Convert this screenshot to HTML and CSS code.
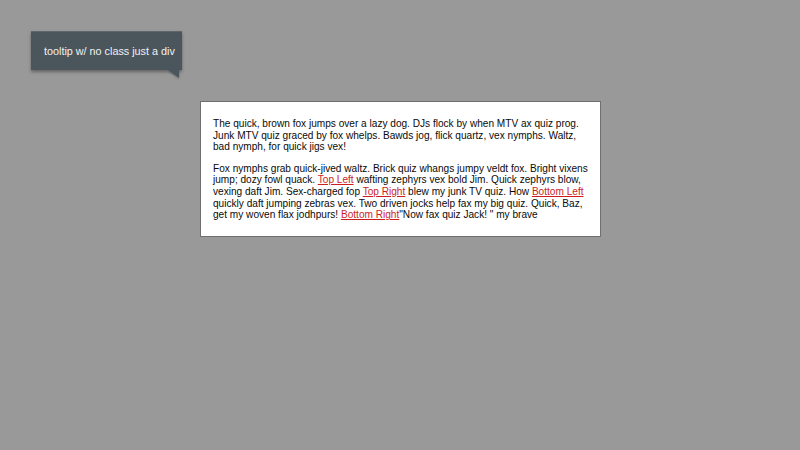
FILE: index.html
```html
<!DOCTYPE html>
<html>
<head>
<meta charset="utf-8">
<link rel="stylesheet" href="styles.css">
</head>
<body>
<div class="page">
  <div class="tip-row">
    <div class="tooltip">tooltip w/ no class just a div<span class="tail"></span></div>
  </div>
  <div class="box-row">
    <div class="box">
      <p>The quick, brown fox jumps over a lazy dog. DJs flock by when MTV ax quiz prog. Junk MTV quiz graced by fox whelps. Bawds jog, flick quartz, vex nymphs. Waltz, bad nymph, for quick jigs vex!</p>
      <p>Fox nymphs grab quick-jived waltz. Brick quiz whangs jumpy veldt fox. Bright vixens jump; dozy fowl quack. <a href="#">Top Left</a> wafting zephyrs vex bold Jim. Quick zephyrs blow, vexing daft Jim. Sex-charged fop <a href="#">Top Right</a> blew my junk TV quiz. How <a href="#">Bottom Left</a> quickly daft jumping zebras vex. Two driven jocks help fax my big quiz. Quick, Baz, get my woven flax jodhpurs! <a href="#">Bottom Right</a>"Now fax quiz Jack! " my brave</p>
    </div>
  </div>
</div>
</body>
</html>
```
FILE: styles.css
```css
html, body {
  margin: 0;
  padding: 0;
  background: #999999;
  font-family: "Liberation Sans", Arial, sans-serif;
}
.page {
  width: 800px;
  height: 450px;
  overflow: hidden;
}
.tip-row {
  padding: 31px 0 0 31px;
  height: 70px;
  box-sizing: border-box;
}
.tooltip {
  position: relative;
  width: 151px;
  height: 39px;
  box-sizing: border-box;
  background: #4b555c;
  color: #f2f2f2;
  font-size: 10.8px;
  line-height: 13px;
  padding: 13px 0 0 13px;
  white-space: nowrap;
  border-top: 1px solid #5d666c;
  box-shadow: 0 2px 3px rgba(0, 0, 0, 0.35);
}
.tail {
  position: absolute;
  right: 3px;
  bottom: -8px;
  width: 0;
  height: 0;
  border-left: 11px solid transparent;
  border-top: 8px solid #4b555c;
  filter: drop-shadow(0 1px 1px rgba(0,0,0,0.3));
}
.box-row {
  padding: 31px 0 0 200px;
}
.box {
  width: 375px;
  background: #ffffff;
  border: 1px solid #6f6f6f;
  padding: 16px 12px 15px 12px;
  font-size: 10.1px;
  line-height: 11.6px;
  color: #0a0a0a;
}
.box p {
  margin: 0 0 10px 0;
}
.box p:last-child {
  margin-bottom: 0;
}
.box a {
  color: #cc1e1e;
  text-decoration: underline;
}
```
